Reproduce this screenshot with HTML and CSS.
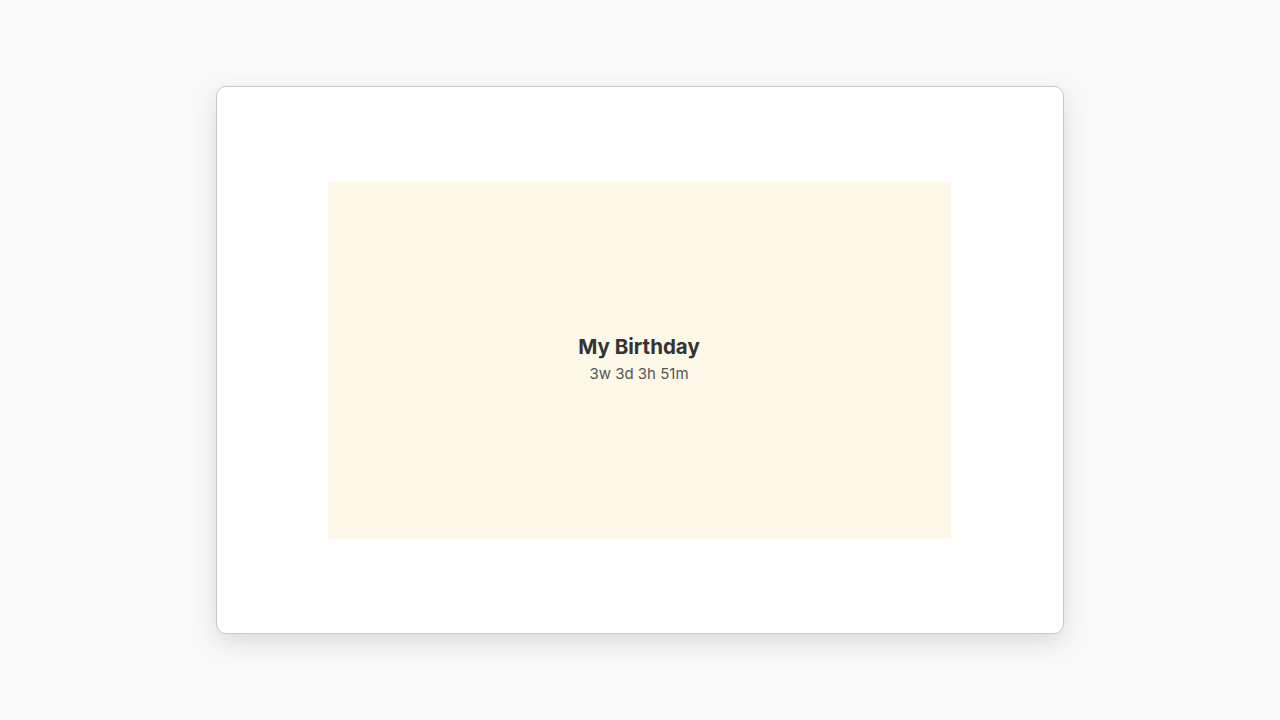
FILE: index.html
```html
<!DOCTYPE html>
<html lang="en">
<head>
    <meta charset="UTF-8" />
    <title>Countdown</title>
    <link rel="stylesheet" href="styles.css">
</head>
<body>

    <div class="window">
        <!-- Countdown widget -->
        <div class="countdown">
            <h1 class="countdown-title">My Birthday</h1>
            <p class="countdown-time">3w 3d 3h 51m</p>
        </div>
    </div>

</body>
</html>
```

FILE: styles.css
```css
* {
    margin: 0;
    padding: 0;
    box-sizing: border-box;
    font-family: Inter, "Noto Sans", sans-serif;
}

body {
    background: #f9f9f9;
    min-height: 100vh;
    display: flex;
    align-items: center;
    justify-content: center;
}

.window {
    width: 848px;
    height: 548px;
    background: #fff;
    border: 1px solid #c9c9c9;
    border-radius: 10px;
    box-shadow: 0 8px 24px rgba(0, 0, 0, 0.12);
    display: flex;
    align-items: center;
    justify-content: center;
}

.countdown {
    width: 623px;
    height: 357px;
    margin-right: 2px;
    padding-bottom: 2px;
    background: #fef8e8;
    display: flex;
    flex-direction: column;
    align-items: center;
    justify-content: center;
    gap: 6px;
}

.countdown-title {
    font-size: 20.5px;
    font-weight: 700;
    color: #333;
    line-height: 1.2;
}

.countdown-time {
    font-size: 15px;
    font-weight: 400;
    color: #555;
    line-height: 1.2;
}
```
